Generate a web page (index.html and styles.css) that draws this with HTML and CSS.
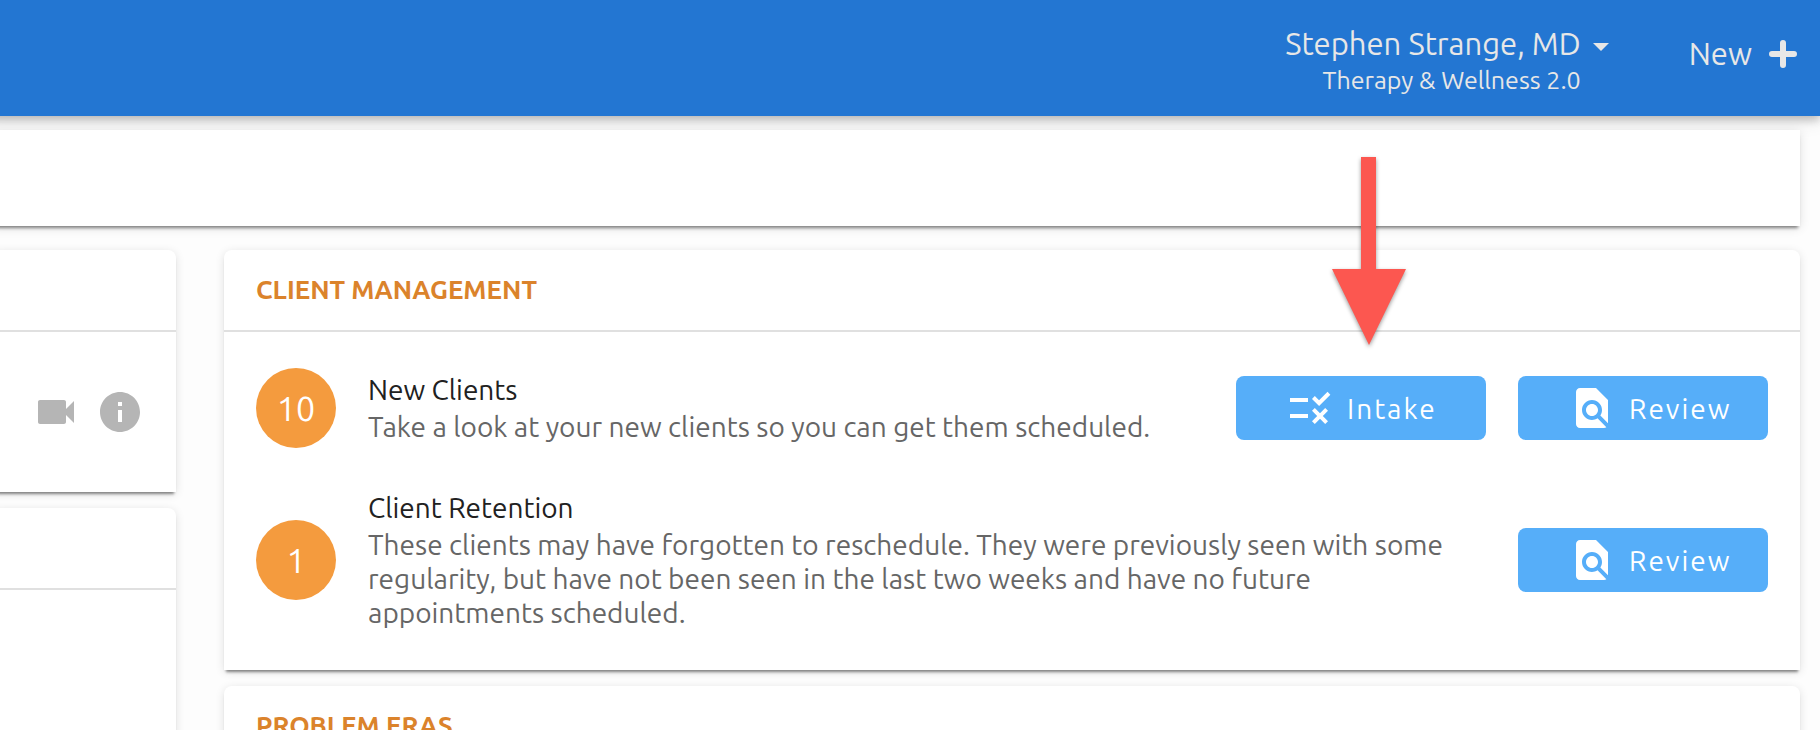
FILE: index.html
```html
<!DOCTYPE html>
<html lang="en">
<head>
  <meta charset="utf-8">
  <title>Therapy &amp; Wellness 2.0</title>
  <link rel="stylesheet" href="styles.css">
</head>
<body>
  <svg class="sprite" aria-hidden="true">
    <symbol id="rule" viewBox="0 0 24 24"><path d="M16.54 11L13 7.46l1.41-1.41 2.12 2.12 4.24-4.24 1.41 1.41L16.54 11zM11 7H2v2h9V7zm10 6.41L19.59 12 17 14.59 14.41 12 13 13.41 15.59 16 13 18.59 14.41 20 17 17.41 19.59 20 21 18.59 18.41 16 21 13.41zM11 15H2v2h9v-2z"/></symbol>
    <symbol id="find" viewBox="0 0 24 24"><path d="M20 19.59V8l-6-6H6c-1.1 0-1.99.9-1.99 2L4 20c0 1.1.89 2 1.99 2H18c.45 0 .85-.15 1.19-.4l-4.43-4.43c-.8.52-1.74.83-2.76.83-2.76 0-5-2.24-5-5s2.24-5 5-5 5 2.24 5 5c0 1.02-.31 1.96-.83 2.75L20 19.59zM9 13c0 1.66 1.34 3 3 3s3-1.34 3-3-1.34-3-3-3-3 1.34-3 3z"/></symbol>
  </svg>

  <header class="topbar">
    <button class="account" type="button">
      <span class="account-names">
        <span class="account-user">Stephen Strange, MD</span>
        <span class="account-org">Therapy &amp; Wellness 2.0</span>
      </span>
      <svg class="caret" viewBox="0 0 16 8" aria-hidden="true"><path d="M0 0h16L8 8z"/></svg>
    </button>
    <button class="new" type="button">
      <span>New</span>
      <svg class="plus" viewBox="0 0 28 28" aria-hidden="true"><path d="M14 3v22M3 14h22"/></svg>
    </button>
  </header>

  <main class="page">
    <section class="strip"></section>
    <div class="columns">
      <div class="column">
        <section class="card">
          <div class="card-head"></div>
          <div class="session">
            <button class="icon-button" type="button" aria-label="Video">
              <svg viewBox="0 0 24 24"><path d="M17 10.5V7c0-.55-.45-1-1-1H4c-.55 0-1 .45-1 1v10c0 .55.45 1 1 1h12c.55 0 1-.45 1-1v-3.5l4 4v-11l-4 4z"/></svg>
            </button>
            <button class="icon-button" type="button" aria-label="Information">
              <svg viewBox="0 0 24 24"><path d="M12 2C6.48 2 2 6.48 2 12s4.48 10 10 10 10-4.48 10-10S17.52 2 12 2zm1 15h-2v-6h2v6zm0-8h-2V7h2v2z"/></svg>
            </button>
          </div>
        </section>
        <section class="card card-tall">
          <div class="card-head"></div>
        </section>
      </div>

      <div class="column">
        <section class="card">
          <div class="card-head"><h2>Client Management</h2></div>
          <ul class="tasks">
            <li class="task">
              <span class="count">10</span>
              <div class="task-text">
                <h3>New Clients</h3>
                <p>Take a look at your new clients so you can get them scheduled.</p>
              </div>
              <div class="callout">
                <svg class="arrow" viewBox="0 0 74 188" aria-hidden="true"><path d="M29 0h15v112h30L37 188 0 112h29z"/></svg>
                <button class="action" type="button"><svg><use href="#rule"/></svg>Intake</button>
              </div>
              <button class="action" type="button"><svg><use href="#find"/></svg>Review</button>
            </li>
            <li class="task">
              <span class="count">1</span>
              <div class="task-text">
                <h3>Client Retention</h3>
                <p>These clients may have forgotten to reschedule. They were previously seen with some regularity, but have not been seen in the last two weeks and have no future appointments scheduled.</p>
              </div>
              <button class="action" type="button"><svg><use href="#find"/></svg>Review</button>
            </li>
          </ul>
        </section>
        <section class="card card-tall">
          <div class="card-head"><h2>Problem Eras</h2></div>
        </section>
      </div>
    </div>
  </main>
</body>
</html>
```
FILE: styles.css
```css
* {
  box-sizing: border-box;
}

body {
  margin: 0;
  height: 100vh;
  overflow: hidden;
  background: #fdfdfd;
  color: #212121;
  font-family: Ubuntu, "Noto Sans", sans-serif;
  font-size: 28px;
}

h2, h3, p, ul {
  margin: 0;
  padding: 0;
}

button {
  padding: 0;
  border: 0;
  background: none;
  color: inherit;
  font: inherit;
  cursor: pointer;
}

svg {
  display: block;
  fill: currentColor;
}

.sprite {
  position: absolute;
  width: 0;
  height: 0;
}

.topbar {
  display: flex;
  justify-content: flex-end;
  align-items: flex-start;
  gap: 80px;
  height: 116px;
  margin-left: -16px;
  padding: 24px 23px 0;
  background: #2376d2;
  color: #e7e7e7;
  box-shadow: 0 4px 8px rgba(0, 0, 0, 0.2), 0 4px 18px rgba(0, 0, 0, 0.12);
}

.account {
  display: flex;
  gap: 12px;
}

.account-names {
  display: flex;
  flex-direction: column;
  align-items: flex-end;
}

.account-user {
  font-size: 31px;
  line-height: 40px;
}

.account-org {
  font-size: 25px;
  line-height: 32px;
}

.caret {
  width: 16px;
  height: 8px;
  margin-top: 19px;
}

.new {
  display: flex;
  align-items: center;
  gap: 17px;
  padding-top: 10px;
  font-size: 31px;
  line-height: 40px;
}

.plus {
  width: 28px;
  height: 28px;
  fill: none;
  stroke: currentColor;
  stroke-width: 6;
  stroke-linecap: round;
}

.page {
  padding: 14px 20px 0 0;
}

.strip,
.card {
  position: relative;
  background: #fff;
  box-shadow: 0 4px 3px -2px rgba(0, 0, 0, 0.45), 0 2px 10px rgba(0, 0, 0, 0.12);
}

.strip {
  height: 96px;
  margin-left: -8px;
}

.columns {
  display: grid;
  grid-template-columns: 184px 1fr;
  gap: 48px;
  margin: 24px 0 0 -8px;
}

.column {
  display: flex;
  flex-direction: column;
  gap: 16px;
}

.card {
  border-radius: 8px 8px 0 0;
}

.card-tall {
  min-height: 300px;
}

.card-head {
  display: flex;
  align-items: center;
  height: 82px;
  padding: 0 32px;
  border-bottom: 2px solid #e0e0e0;
}

.card-head h2 {
  color: #db832b;
  font-size: 26px;
  font-weight: 700;
  line-height: 32px;
  text-transform: uppercase;
}

.session {
  display: flex;
  justify-content: flex-end;
  align-items: center;
  gap: 16px;
  height: 160px;
  padding: 0 32px;
  color: #b5b5b5;
}

.icon-button svg {
  width: 48px;
  height: 48px;
}

.tasks {
  padding: 12px 0 22px;
  list-style: none;
}

.task {
  display: flex;
  align-items: center;
  gap: 32px;
  min-height: 128px;
  padding: 16px 32px;
}

.count {
  display: flex;
  flex: none;
  justify-content: center;
  align-items: center;
  width: 80px;
  height: 80px;
  border-radius: 50%;
  background: #f49b3e;
  color: #fff;
  font-size: 34px;
}

.task-text {
  flex: 1;
  padding-bottom: 2px;
}

.task-text h3 {
  font-size: 28px;
  font-weight: 400;
  line-height: 40px;
}

.task-text p {
  color: #666;
  line-height: 34px;
}

.action {
  display: flex;
  flex: none;
  align-items: center;
  gap: 13px;
  width: 250px;
  height: 64px;
  padding-left: 50px;
  border-radius: 8px;
  background: #56aef9;
  color: #fff;
  letter-spacing: 2px;
}

.action svg {
  width: 48px;
  height: 48px;
}

.callout {
  position: relative;
}

.arrow {
  position: absolute;
  bottom: calc(100% + 31px);
  left: 96px;
  width: 74px;
  height: 188px;
  fill: #fc5750;
  overflow: visible;
  filter: drop-shadow(0 2px 2px rgba(0, 0, 0, 0.4));
}
```
